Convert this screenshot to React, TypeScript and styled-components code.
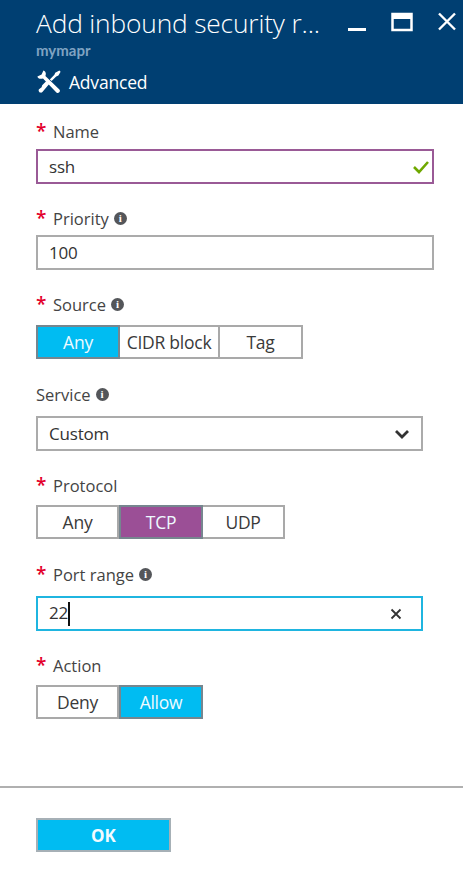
import React from "react";
import styled, { createGlobalStyle } from "styled-components";

const GlobalStyle = createGlobalStyle`
	html, body {
		margin: 0;
		padding: 0;
		background: #fff;
	}
	body {
		font-family: "Open Sans", "Noto Sans", "Liberation Sans", sans-serif;
		color: #3a3a3a;
	}
`;

const Blade = styled.div`
	width: 463px;
	height: 884px;
	overflow: hidden;
	display: flex;
	flex-direction: column;
`;

const Header = styled.header`
	flex: none;
	height: 104px;
	background: #003f72;
	color: #fff;
	padding: 6px 0 0 36px;
	box-sizing: border-box;
	display: flex;
	flex-direction: column;
`;

const TitleRow = styled.div`
	display: flex;
	align-items: flex-start;
`;

const Title = styled.h1`
	margin: 0;
	font-size: 26.3px;
	font-weight: 300;
	line-height: 34px;
	letter-spacing: -0.15px;
	width: 312px;
	white-space: nowrap;
`;

const WindowControls = styled.div`
	display: flex;
	align-items: flex-start;
`;

const ControlIcon = styled.svg<{ $gap?: number }>`
	display: block;
	color: #fff;
	margin-left: ${(p) => p.$gap ?? 0}px;
`;

const Subtitle = styled.div`
	font-family: "Lato", "Open Sans", sans-serif;
	font-size: 15px;
	font-weight: 700;
	line-height: 18px;
	color: #7fa3c2;
	margin-top: 1px;
`;

const Command = styled.div`
	display: flex;
	align-items: center;
	gap: 8px;
	margin: 11px 0 0 1px;
	font-size: 17.5px;
	line-height: 24px;
	letter-spacing: -0.2px;
`;

const Form = styled.main`
	flex: none;
	padding: 0 0 0 36px;
	display: flex;
	flex-direction: column;
`;

const Field = styled.section<{ $top: number }>`
	margin-top: ${(p) => p.$top}px;
`;

const Label = styled.div<{ $gap: number }>`
	height: 24px;
	display: flex;
	align-items: center;
	font-size: 16.5px;
	color: #444;
	margin-bottom: ${(p) => p.$gap}px;
`;

const Star = styled.span`
	color: #e3002b;
	font-size: 19px;
	width: 17px;
	line-height: 24px;
	height: 24px;
	font-weight: 600;
`;

const InfoDot = styled.span`
	width: 13px;
	height: 13px;
	border-radius: 50%;
	background: #54565a;
	color: #fff;
	font-family: "Liberation Serif", serif;
	font-weight: 700;
	font-size: 11px;
	line-height: 13px;
	text-align: center;
	margin-left: 5px;
`;

const InputBox = styled.div<{ $width: number; $border: string; $padRight?: number }>`
	width: ${(p) => p.$width}px;
	height: 35px;
	box-sizing: border-box;
	border: 2px solid ${(p) => p.$border};
	display: flex;
	align-items: center;
	justify-content: space-between;
	padding: 0 ${(p) => p.$padRight ?? 11}px 0 11px;
	font-size: 17px;
	letter-spacing: -0.2px;
	color: #333;
`;

const Caret = styled.span`
	display: inline-block;
	width: 2px;
	height: 24px;
	background: #111;
	vertical-align: middle;
`;

const ClearIcon = styled.svg`
	margin-right: 8px;
`;

const Segments = styled.div`
	display: flex;
	height: 34px;
`;

const Segment = styled.div<{ $width: number; $fill?: string; $joined?: boolean }>`
	width: ${(p) => p.$width}px;
	box-sizing: border-box;
	border: 2px solid ${(p) => (p.$fill ? "#76868f" : "#a9a9a9")};
	${(p) => p.$joined && !p.$fill && "border-left-width: 0;"}
	background: ${(p) => p.$fill ?? "#fff"};
	color: ${(p) => (p.$fill ? "#eefaff" : "#3a3a3a")};
	display: flex;
	align-items: center;
	justify-content: center;
	font-size: 17.5px;
	letter-spacing: -0.25px;
	white-space: nowrap;
`;

const Footer = styled.footer`
	flex: none;
	border-top: 2px solid #b0b0b0;
	height: 97px;
	padding: 30px 0 0 36px;
`;

const OkButton = styled.div`
	width: 135px;
	height: 34px;
	box-sizing: border-box;
	border: 2px solid #a6b0b6;
	background: #00bcf2;
	color: #f2fbff;
	font-size: 17px;
	font-weight: 700;
	display: flex;
	align-items: center;
	justify-content: center;
`;

const Spacer = styled.div`
	height: 67px;
`;

const Info = () => <InfoDot>i</InfoDot>;

const ToolsIcon = () => (
	<svg width="24" height="24" viewBox="0 0 24 24" fill="#fff">
		{/* wrench, jaws open to the top left */}
		<path d="M6.4 0.4 L4.6 4.6 L0.4 6.4 C0.8 8.6 3.4 9.4 6 8.4 L19.4 22.4 C21.2 24.2 24.2 21.4 22.4 19.4 L8.4 6 C9.4 3.4 8.6 0.8 6.4 0.4 Z" />
		{/* screwdriver */}
		<path d="M22.4 0.6 L23.6 1.8 L21.4 5.6 L19.2 6.4 L14.6 11 L12.8 9.4 L17.4 4.8 L18.2 2.8 Z" />
		<path d="M9.4 11 L12.4 13.8 L5.4 22 C3.6 23.8 0.6 21.4 2 19.2 L4.6 17.2 L5.2 15.2 Z" />
	</svg>
);

export default function App() {
	return (
		<Blade>
			<GlobalStyle />
			<Header>
				<TitleRow>
					<Title>Add inbound security r...</Title>
					<WindowControls>
						<ControlIcon width="18" height="34" viewBox="0 0 18 34">
							<rect x="0" y="22" width="18" height="3" fill="currentColor" />
						</ControlIcon>
						<ControlIcon $gap={25} width="22" height="34" viewBox="0 0 22 34">
							<rect x="1.5" y="8" width="19" height="16" fill="none" stroke="currentColor" strokeWidth="2.5" />
							<rect x="1" y="8" width="20" height="5" fill="currentColor" />
						</ControlIcon>
						<ControlIcon $gap={25} width="18" height="34" viewBox="0 0 18 34">
							<path d="M1 7.5 L17 23.5 M17 7.5 L1 23.5" stroke="currentColor" strokeWidth="2.4" fill="none" />
						</ControlIcon>
					</WindowControls>
				</TitleRow>
				<Subtitle>mymapr</Subtitle>
				<Command>
					<ToolsIcon />
					Advanced
				</Command>
			</Header>
			<Form>
				<Field $top={15}>
					<Label $gap={6}>
						<Star>*</Star>Name
					</Label>
					<InputBox $width={398} $border="#9a5a96" $padRight={2}>
						ssh
						<svg width="18" height="14" viewBox="0 0 18 14">
							<path d="M2 7 L7 12 L16 2" stroke="#6fa800" strokeWidth="2.6" fill="none" />
						</svg>
					</InputBox>
				</Field>
				<Field $top={22}>
					<Label $gap={5}>
						<Star>*</Star>Priority
						<Info />
					</Label>
					<InputBox $width={398} $border="#ababab">
						100
					</InputBox>
				</Field>
				<Field $top={22}>
					<Label $gap={9}>
						<Star>*</Star>Source
						<Info />
					</Label>
					<Segments>
						<Segment $width={84} $fill="#00bcf2">
							Any
						</Segment>
						<Segment $width={100} $joined>
							CIDR block
						</Segment>
						<Segment $width={83} $joined>
							Tag
						</Segment>
					</Segments>
				</Field>
				<Field $top={23}>
					<Label $gap={10}>
						Service
						<Info />
					</Label>
					<InputBox $width={387} $border="#ababab">
						Custom
						<svg width="16" height="10" viewBox="0 0 16 10">
							<path d="M2 2 L8 8 L14 2" stroke="#333" strokeWidth="2.8" fill="none" />
						</svg>
					</InputBox>
				</Field>
				<Field $top={22}>
					<Label $gap={8}>
						<Star>*</Star>Protocol
					</Label>
					<Segments>
						<Segment $width={83}>Any</Segment>
						<Segment $width={84} $fill="#9b4f96">
							TCP
						</Segment>
						<Segment $width={82} $joined>
							UDP
						</Segment>
					</Segments>
				</Field>
				<Field $top={23}>
					<Label $gap={10}>
						<Star>*</Star>Port range
						<Info />
					</Label>
					<InputBox $width={387} $border="#1fb5e0">
						<span>
							22
							<Caret />
						</span>
						<ClearIcon width="12" height="12" viewBox="0 0 12 12">
							<path d="M1.5 1.5 L10.5 10.5 M10.5 1.5 L1.5 10.5" stroke="#333" strokeWidth="1.8" fill="none" />
						</ClearIcon>
					</InputBox>
				</Field>
				<Field $top={22}>
					<Label $gap={8}>
						<Star>*</Star>Action
					</Label>
					<Segments>
						<Segment $width={83}>Deny</Segment>
						<Segment $width={84} $fill="#00bcf2">
							Allow
						</Segment>
					</Segments>
				</Field>
				<Spacer />
			</Form>
			<Footer>
				<OkButton>OK</OkButton>
			</Footer>
		</Blade>
	);
}
